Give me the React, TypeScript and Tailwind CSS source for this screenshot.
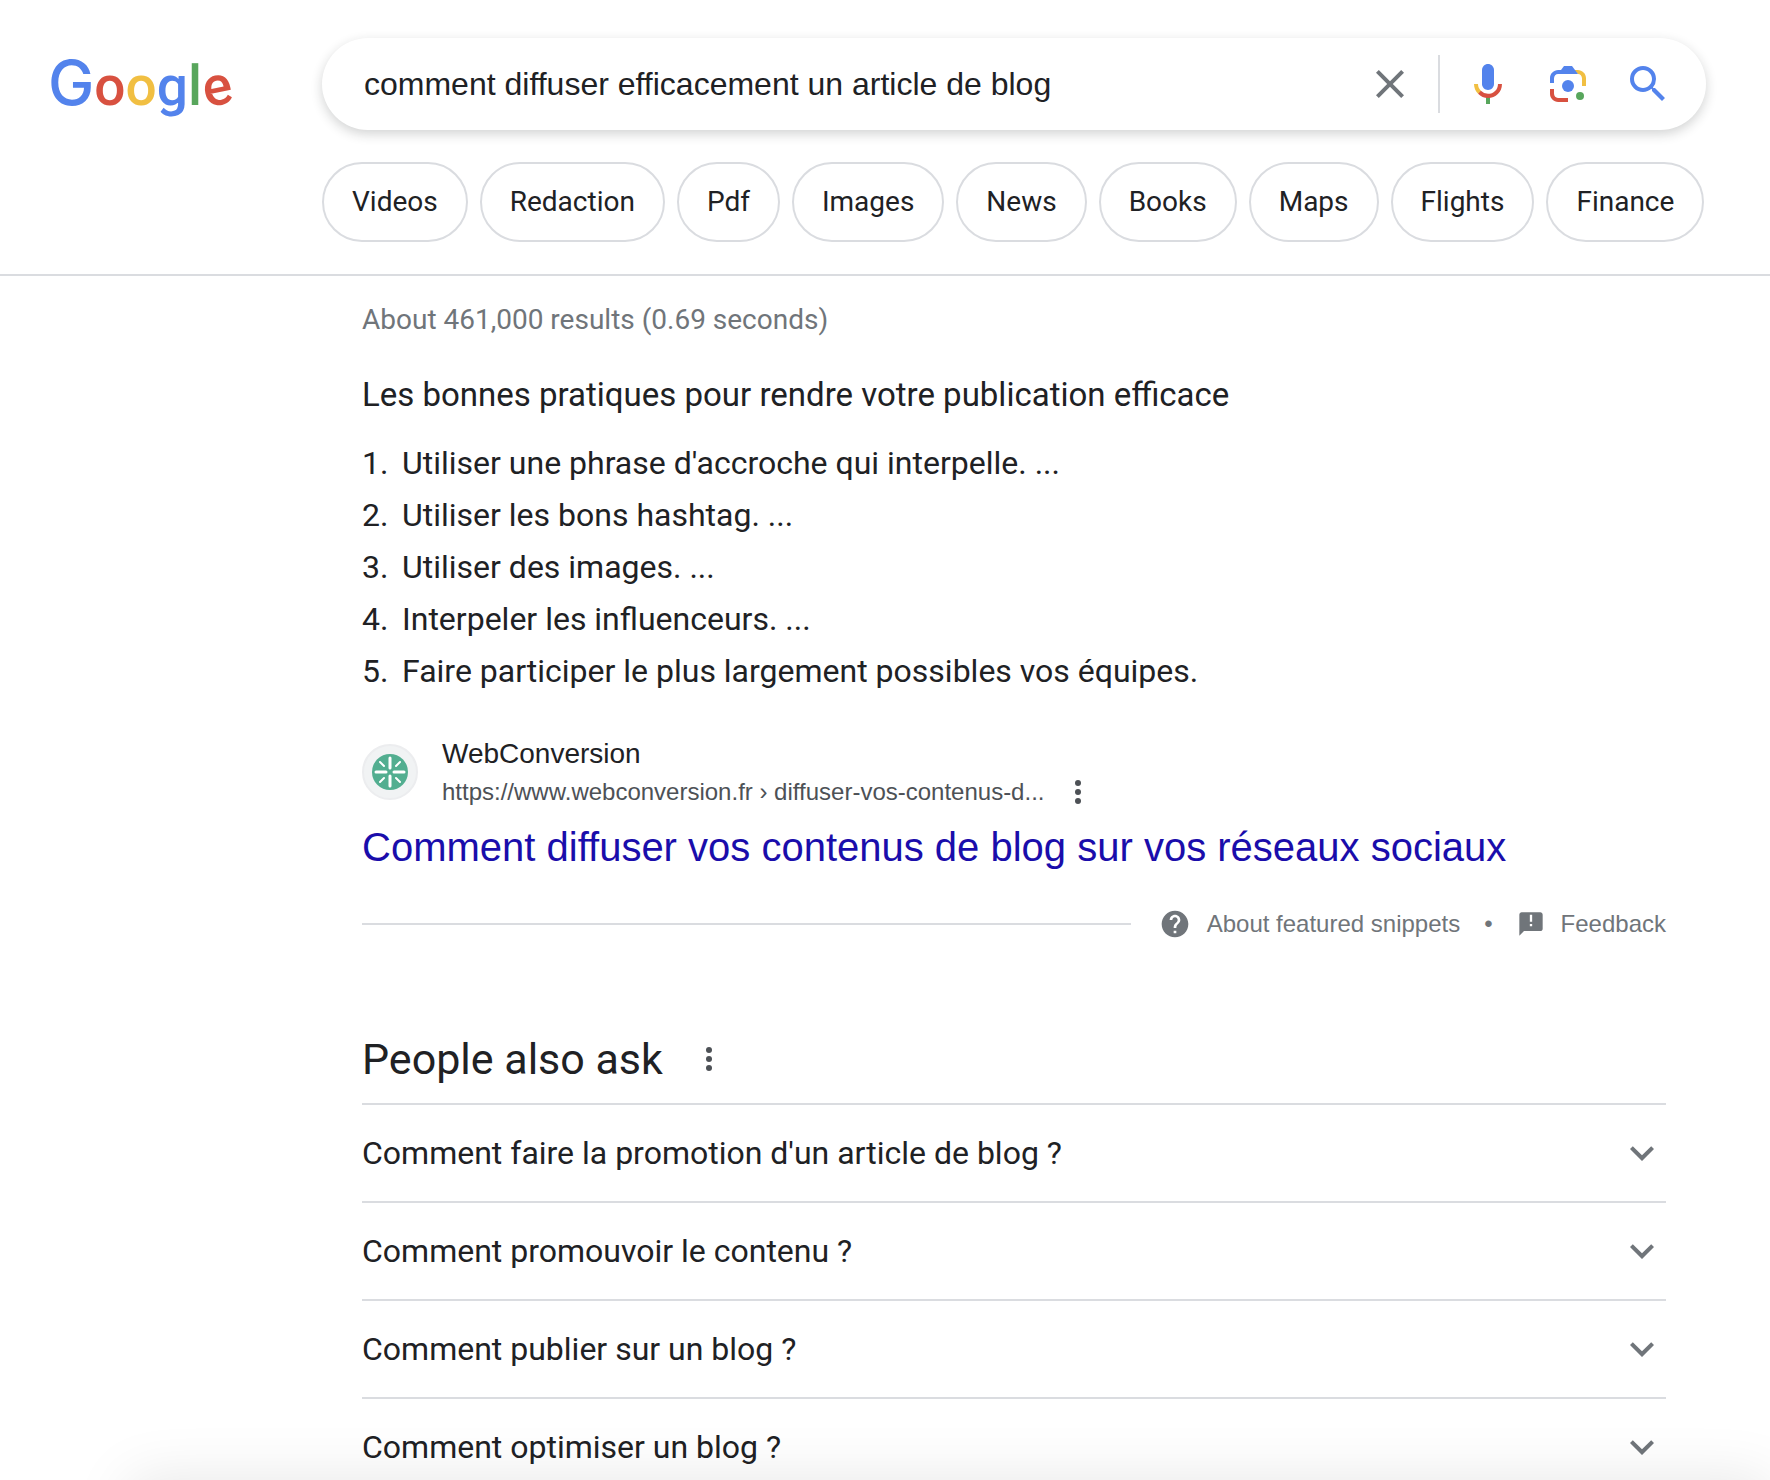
import { useState } from 'react';
import clsx from 'clsx';

const filters = ['Videos', 'Redaction', 'Pdf', 'Images', 'News', 'Books', 'Maps', 'Flights', 'Finance'];

const steps = [
    "Utiliser une phrase d'accroche qui interpelle. ...",
    'Utiliser les bons hashtag. ...',
    'Utiliser des images. ...',
    'Interpeler les influenceurs. ...',
    'Faire participer le plus largement possibles vos équipes.',
];

const questions = [
    "Comment faire la promotion d'un article de blog ?",
    'Comment promouvoir le contenu ?',
    'Comment publier sur un blog ?',
    'Comment optimiser un blog ?',
];

function Logo() {
    return (
        <a href="#" aria-label="Google" className="text-[55px] leading-[80px] font-medium text-[#5383ec]">
            <span className="font-['Inter'] text-[62px]">G</span>
            <span className="text-[#d85140]">o</span>
            <span className="text-[#f1bf42]">o</span>g<span className="text-[#58a65c]">l</span>
            <span className="inline-block -rotate-12 leading-none text-[#d85140]">e</span>
        </a>
    );
}

function CloseIcon() {
    return (
        <svg viewBox="0 0 24 24" className="size-12" fill="#70757a" aria-hidden="true">
            <path d="M19 6.41L17.59 5 12 10.59 6.41 5 5 6.41 10.59 12 5 17.59 6.41 19 12 13.41 17.59 19 19 17.59 13.41 12z" />
        </svg>
    );
}

function MicIcon() {
    return (
        <svg viewBox="0 0 24 24" className="size-12" aria-hidden="true">
            <path fill="#5383ec" d="m12 15c1.66 0 3-1.31 3-2.97v-7.02c0-1.66-1.34-3.01-3-3.01s-3 1.34-3 3.01v7.02c0 1.66 1.34 2.97 3 2.97z" />
            <path fill="#58a65c" d="m11 18.08h2v3.92h-2z" />
            <path fill="#f1bf42" d="m7.05 16.87c-1.27-1.33-2.05-2.83-2.05-4.87h2c0 1.45 0.56 2.42 1.47 3.38v0.32l-1.15 1.18z" />
            <path fill="#d85140" d="m12 16.93a4.97 5.25 0 0 1 -3.54 -1.55l-1.41 1.49c1.26 1.34 3.02 2.13 4.95 2.13 3.87 0 6.99-2.92 6.99-7h-1.99c0 2.92-2.24 4.93-5 4.93z" />
        </svg>
    );
}

function LensIcon() {
    return (
        <svg viewBox="0 0 192 192" className="size-12" aria-hidden="true">
            <circle fill="#58a65c" cx="144.07" cy="144" r="16" />
            <circle fill="#5383ec" cx="96.07" cy="104" r="24" />
            <path fill="#d85140" d="M24,135.2c0,18.11,14.69,32.8,32.8,32.8H96v-16l-40.1-0.1c-8.8,0-15.9-8.19-15.9-17.9v-18H24V135.2z" />
            <path fill="#f1bf42" d="M168,72.8c0-18.11-14.69-32.8-32.8-32.8H116l20,16c8.8,0,16,8.29,16,18v30h16V72.8z" />
            <path fill="#5383ec" d="M112,24l-32,0L68,40H56.8C38.69,40,24,54.69,24,72.8V92h16V74c0-9.71,7.2-18,16-18h80L112,24z" />
        </svg>
    );
}

function SearchIcon() {
    return (
        <svg viewBox="0 0 24 24" className="size-12" fill="#5383ec" aria-hidden="true">
            <path d="M15.5 14h-.79l-.28-.27A6.471 6.471 0 0 0 16 9.5 6.5 6.5 0 1 0 9.5 16c1.61 0 3.09-.59 4.23-1.57l.27.28v.79l5 4.99L20.49 19l-4.99-5zm-6 0C7.01 14 5 11.99 5 9.5S7.01 5 9.5 5 14 7.01 14 9.5 11.99 14 9.5 14z" />
        </svg>
    );
}

function MoreIcon() {
    return (
        <svg viewBox="0 0 24 24" className="size-9" fill="#4d5156" aria-hidden="true">
            <circle cx="12" cy="6" r="2" />
            <circle cx="12" cy="12" r="2" />
            <circle cx="12" cy="18" r="2" />
        </svg>
    );
}

function HelpIcon() {
    return (
        <svg viewBox="0 0 24 24" className="size-8" fill="#70757a" aria-hidden="true">
            <path d="M12 2C6.48 2 2 6.48 2 12s4.48 10 10 10 10-4.48 10-10S17.52 2 12 2zm1 17h-2v-2h2v2zm2.07-7.75l-.9.92C13.45 12.9 13 13.5 13 15h-2v-.5c0-1.1.45-2.1 1.17-2.83l1.24-1.26c.37-.36.59-.86.59-1.41 0-1.1-.9-2-2-2s-2 .9-2 2H8c0-2.21 1.79-4 4-4s4 1.79 4 4c0 .88-.36 1.68-.93 2.25z" />
        </svg>
    );
}

function FeedbackIcon() {
    return (
        <svg viewBox="0 0 24 24" className="size-7" fill="#70757a" aria-hidden="true">
            <path d="M20 2H4c-1.1 0-1.99.9-1.99 2L2 22l4-4h14c1.1 0 2-.9 2-2V4c0-1.1-.9-2-2-2zm-7 12h-2v-2h2v2zm0-4h-2V4h2v6z" />
        </svg>
    );
}

function ChevronIcon() {
    return (
        <svg viewBox="0 0 24 24" className="size-12" fill="#70757a" aria-hidden="true">
            <path d="M7.41 8.59L12 13.17l4.59-4.58L18 10l-6 6-6-6 1.41-1.41z" />
        </svg>
    );
}

function SiteIcon() {
    return (
        <span className="flex size-14 items-center justify-center rounded-full border-2 border-[#ecedef] bg-[#f1f3f4]">
            <svg viewBox="0 0 36 36" className="size-9" aria-hidden="true">
                <circle cx="18" cy="18" r="18" fill="#52ae90" />
                <g stroke="#fff" strokeWidth="3" strokeLinecap="round">
                    <path d="M18 4v10M18 22v10M4 18h10M22 18h10" />
                    <path strokeWidth="2" d="M8 8l4 4M28 8l-4 4M8 28l4-4M28 28l-4-4" />
                </g>
            </svg>
        </span>
    );
}

export default function App() {
    const [query, setQuery] = useState('comment diffuser efficacement un article de blog');
    const [open, setOpen] = useState<number | null>(null);

    return (
        <div className="min-h-screen bg-white font-['Roboto',sans-serif] text-[#202124]">
            <header className="grid grid-cols-[322px_1fr] border-b-2 border-[#dadce0] pt-[38px] pr-16 pb-8">
                <div className="flex items-center pl-12">
                    <Logo />
                </div>
                <form
                    role="search"
                    onSubmit={(e) => e.preventDefault()}
                    className="flex h-[92px] items-center rounded-full bg-white pr-[34px] pl-[42px] shadow-[0_4px_12px_rgba(32,33,36,0.2)]"
                >
                    <input
                        type="text"
                        aria-label="Search"
                        value={query}
                        onChange={(e) => setQuery(e.target.value)}
                        className="min-w-0 flex-1 font-['Liberation_Sans',sans-serif] text-[32px] outline-none"
                    />
                    <button type="button" aria-label="Clear" onClick={() => setQuery('')}>
                        <CloseIcon />
                    </button>
                    <span className="mx-6 h-[58px] w-[2px] bg-[#dadce0]" />
                    <div className="flex items-center gap-8">
                        <button type="button" aria-label="Search by voice"><MicIcon /></button>
                        <button type="button" aria-label="Search by image"><LensIcon /></button>
                        <button type="submit" aria-label="Search"><SearchIcon /></button>
                    </div>
                </form>
                <nav className="col-start-2 mt-8 flex gap-3">
                    {filters.map((name) => (
                        <a key={name} href="#" className="rounded-full border-2 border-[#dadce0] px-7 text-[28px] leading-[76px]">
                            {name}
                        </a>
                    ))}
                </nav>
            </header>

            <main className="pr-[104px] pl-[362px]">
                <p className="pt-6 text-[28px] leading-10 text-[#70757a]">About 461,000 results (0.69 seconds)</p>

                <section className="mt-[29px]">
                    <h2 className="text-[33px] leading-[52px]">Les bonnes pratiques pour rendre votre publication efficace</h2>
                    <ol className="mt-4 text-[32px] leading-[52px]">
                        {steps.map((step, i) => (
                            <li key={step} className="flex">
                                <span className="w-10">{i + 1}.</span>
                                {step}
                            </li>
                        ))}
                    </ol>

                    <div className="mt-[37px] font-['Liberation_Sans',sans-serif]">
                        <div className="flex items-center gap-6">
                            <SiteIcon />
                            <div>
                                <p className="text-[28px] leading-10">WebConversion</p>
                                <div className="flex items-center gap-4">
                                    <cite className="text-2xl leading-9 text-[#4d5156] not-italic">
                                        https://www.webconversion.fr › diffuser-vos-contenus-d...
                                    </cite>
                                    <button type="button" aria-label="About this result"><MoreIcon /></button>
                                </div>
                            </div>
                        </div>
                        <h3 className="mt-3 text-[40px] leading-[50px] text-[#1a0dab]">
                            <a href="#">Comment diffuser vos contenus de blog sur vos réseaux sociaux</a>
                        </h3>
                    </div>

                    <div className="mt-9 flex items-center font-['Liberation_Sans',sans-serif] text-2xl leading-8 text-[#70757a]">
                        <span className="mr-7 h-[2px] flex-1 bg-[#dadce0]" />
                        <a href="#" className="flex items-center gap-4"><HelpIcon />About featured snippets</a>
                        <span className="mx-6">•</span>
                        <a href="#" className="flex items-center gap-4"><FeedbackIcon />Feedback</a>
                    </div>
                </section>

                <section className="mt-[93px]">
                    <div className="flex items-center gap-7 pb-[18px]">
                        <h2 className="text-[43px] leading-[52px]">People also ask</h2>
                        <button type="button" aria-label="About these results"><MoreIcon /></button>
                    </div>
                    {questions.map((question, i) => (
                        <button
                            key={question}
                            type="button"
                            aria-expanded={open === i}
                            onClick={() => setOpen(open === i ? null : i)}
                            className="flex h-[98px] w-full items-center justify-between border-t-2 border-[#dadce0] text-left text-[32px]"
                        >
                            {question}
                            <span className={clsx('transition-transform', open === i && 'rotate-180')}>
                                <ChevronIcon />
                            </span>
                        </button>
                    ))}
                </section>
            </main>

            {/* Shade cast by the sheet docked under the window */}
            <div className="pointer-events-none fixed top-full right-0 left-[130px] h-20 shadow-[0_0_60px_rgba(0,0,0,0.1)]" />
        </div>
    );
}
